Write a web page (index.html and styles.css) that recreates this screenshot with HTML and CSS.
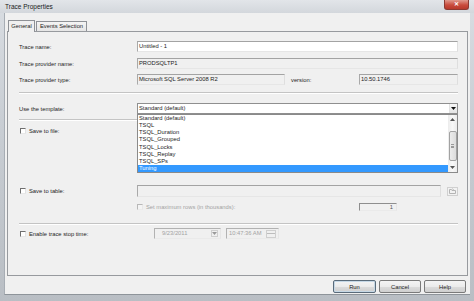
FILE: index.html
```html
<!DOCTYPE html>
<html>
<head>
<meta charset="utf-8">
<title>Trace Properties</title>
<link rel="stylesheet" href="styles.css">
</head>
<body>
<div class="window">
  <div class="titlebar">
    <span class="title">Trace Properties</span>
    <span class="close">&#x2715;</span>
  </div>
  <div class="client">
    <div class="tabs">
      <div class="tab active">General</div>
      <div class="tab">Events Selection</div>
    </div>
    <div class="panel">
      <div class="row r1">
        <span class="label">Trace name:</span>
        <div class="box edit grow">Untitled - 1</div>
      </div>
      <div class="row r2">
        <span class="label">Trace provider name:</span>
        <div class="box ro grow">PRODSQLTP1</div>
      </div>
      <div class="row r3">
        <span class="label">Trace provider type:</span>
        <div class="box ro type">Microsoft SQL Server 2008 R2</div>
        <span class="vlabel">version:</span>
        <div class="box ro grow">10.50.1746</div>
      </div>
      <div class="sep s1"></div>
      <div class="row r4">
        <span class="label">Use the template:</span>
        <div class="combo grow">
          <span class="combo-text">Standard (default)</span>
          <span class="combo-btn"><svg width="5" height="3" viewBox="0 0 5 3"><path d="M0 0H5L2.5 3Z" fill="#111"/></svg></span>
        </div>
        <div class="droplist">
          <ul class="items">
            <li>Standard (default)</li>
            <li>TSQL</li>
            <li>TSQL_Duration</li>
            <li>TSQL_Grouped</li>
            <li>TSQL_Locks</li>
            <li>TSQL_Replay</li>
            <li>TSQL_SPs</li>
            <li class="sel">Tuning</li>
          </ul>
          <div class="vscroll">
            <svg class="arr" width="5" height="3" viewBox="0 0 5 3"><path d="M0 3H5L2.5 0Z" fill="#555"/></svg>
            <div class="thumb"><span class="grip"></span></div>
            <svg class="arr" width="5" height="3" viewBox="0 0 5 3"><path d="M0 0H5L2.5 3Z" fill="#555"/></svg>
          </div>
        </div>
      </div>
      <div class="sep s2"></div>
      <div class="row r5">
        <span class="check"></span>
        <span class="clabel">Save to file:</span>
      </div>
      <div class="row r6">
        <span class="check"></span>
        <span class="clabel table-label">Save to table:</span>
        <div class="box ro grow"></div>
        <span class="browse"><svg width="7" height="6" viewBox="0 0 7 6"><path d="M0.5 1.5H2.5L3 2.5H6.5V5.5H0.5Z" fill="none" stroke="#b4b4b4"/><path d="M3 0.5L5 2" stroke="#c4c4c4"/></svg></span>
      </div>
      <div class="row r7">
        <span class="indent"></span>
        <span class="check dis"></span>
        <span class="clabel dim">Set maximum rows (in thousands):</span>
        <div class="box num">1</div>
      </div>
      <div class="sep s3"></div>
      <div class="row r8">
        <span class="check"></span>
        <span class="clabel stop-label">Enable trace stop time:</span>
        <div class="box picker date">
          <span class="dim">9/23/2011</span>
          <span class="pick-btn"><svg width="5" height="3" viewBox="0 0 5 3"><path d="M0 0H5L2.5 3Z" fill="#9a9a9a"/></svg></span>
        </div>
        <div class="box picker time">
          <span class="dim">10:47:36 AM</span>
          <span class="spin"><span class="spin-up"></span><span class="spin-dn"></span></span>
        </div>
      </div>
    </div>
    <div class="buttons">
      <button class="btn default">Run</button>
      <button class="btn">Cancel</button>
      <button class="btn">Help</button>
    </div>
  </div>
</div>
</body>
</html>
```

FILE: styles.css
```css
* { box-sizing: border-box; }
html, body { margin: 0; padding: 0; }
body {
  width: 474px;
  height: 301px;
  overflow: hidden;
  font-family: "Liberation Sans", Arial, sans-serif;
  font-size: 5.8px;
  color: #1c1c1c;
  background: #c3c8ce;
}
.window {
  width: 474px;
  height: 301px;
  display: flex;
  flex-direction: column;
  background: linear-gradient(#d9dde2, #c9ced4 40%, #b9bec4);
}
.titlebar {
  height: 13px;
  flex: none;
  display: flex;
  align-items: flex-start;
  padding-left: 5px;
  background: linear-gradient(#e2e5e9, #d3d7dc);
}
.title {
  font-size: 6.5px;
  line-height: 13px;
  color: #1a1a1a;
}
.close {
  margin-left: auto;
  margin-right: 5px;
  width: 25px;
  height: 10px;
  border: 1px solid #8c3a32;
  border-top: none;
  border-radius: 0 0 3px 3px;
  background: linear-gradient(#e09a8e, #c94c3d 55%, #b8392b);
  color: #fff;
  font-size: 6px;
  line-height: 9px;
  text-align: center;
  font-weight: bold;
}
.client {
  flex: 1;
  margin: 0 4px 6px 4px;
  border-left: 1px solid #a7adb4;
  border-bottom: 1px solid #8e949a;
  background: #f0f0f0;
  padding-top: 7px;
  display: flex;
  flex-direction: column;
}
.tabs {
  height: 11px;
  display: flex;
  align-items: flex-end;
  padding-left: 3px;
  position: relative;
  z-index: 1;
}
.tab {
  height: 10px;
  line-height: 9px;
  padding: 0 2px;
  border: 1px solid #8e9196;
  border-bottom: none;
  background: linear-gradient(#f4f4f4, #e6e6e6);
  font-size: 5.8px;
  white-space: nowrap;
  text-align: center;
  margin-right: 1px;
}
.tab.active {
  height: 12px;
  margin-bottom: -1px;
  background: #f0f0f0;
  width: 27px;
  line-height: 11px;
}
.tab:not(.active) { width: 51px; }
.panel {
  height: 245px;
  margin: 0 2px 0 2px;
  border: 1px solid #979a9e;
  padding: 0 9px 0 11px;
  background: #f0f0f0;
  display: flex;
  flex-direction: column;
}
.row {
  display: flex;
  align-items: center;
  flex: none;
  position: relative;
}
.label { width: 118px; flex: none; }
.grow { flex: 1; }
.box {
  height: 11px;
  line-height: 9px;
  padding: 0 1px;
  border: 1px solid;
  border-color: #a3a3a3 #dedede #e6e6e6 #a9a9a9;
  white-space: nowrap;
  overflow: hidden;
}
.edit { background: #fff; }
.ro { background: #f0f0f0; }
.r1 { margin-top: 9px; height: 11px; }
.r2 { margin-top: 6px; height: 11px; }
.r3 { margin-top: 5px; height: 11px; }
.type { width: 148px; flex: none; }
.vlabel { width: 68px; flex: none; margin-left: 6px; }
.sep {
  height: 2px;
  flex: none;
  border-top: 1px solid #c4c4c4;
  border-bottom: 1px solid #ffffff;
}
.s1 { margin-top: 7px; }
.r4 { margin-top: 9px; height: 11px; z-index: 2; }
.combo {
  height: 11px;
  border: 1px solid #8f8f8f;
  background: #fff;
  display: flex;
  align-items: center;
  padding-left: 1px;
}
.combo-text { flex: 1; line-height: 9px; }
.combo-btn {
  width: 8px;
  height: 9px;
  display: flex;
  align-items: center;
  justify-content: center;
  border-left: 1px solid #e2e2e2;
  background: linear-gradient(#f7f7f7, #e4e4e4);
}
.droplist {
  position: absolute;
  top: 11px;
  left: 118px;
  right: 0;
  height: 59px;
  border: 1px solid #8a8a8a;
  background: #fff;
  display: flex;
}
.items {
  list-style: none;
  margin: 0;
  padding: 0;
  flex: 1;
}
.items li {
  height: 7.125px;
  line-height: 7.125px;
  padding-left: 1px;
  white-space: nowrap;
}
.items li.sel {
  background: #3399ff;
  color: #fff;
}
.vscroll {
  width: 9px;
  flex: none;
  background: linear-gradient(90deg, #ececec, #f8f8f8 50%, #ececec);
  display: flex;
  flex-direction: column;
  align-items: center;
  padding: 3px 0 3px;
}
.vscroll .arr { flex: none; }
.thumb {
  margin-top: 10px;
  width: 8px;
  height: 30px;
  border: 1px solid #a2a2a2;
  border-radius: 2px;
  background: linear-gradient(90deg, #ececec, #dcdcdc);
  display: flex;
  align-items: center;
  justify-content: center;
  margin-bottom: auto;
}
.grip {
  width: 3px;
  height: 4px;
  border-top: 1px solid #999;
  border-bottom: 1px solid #999;
  background: linear-gradient(transparent 1px, #999 1px, #999 2px, transparent 2px);
}
.s2 { margin-top: 5px; }
.check {
  width: 6px;
  height: 6px;
  flex: none;
  margin-left: 1px;
  border: 1px solid;
  border-color: #6f6f6f #e2e2e2 #e8e8e8 #6f6f6f;
  background: #fff;
}
.check.dis {
  border-color: #b8b8b8 #e8e8e8 #ececec #b8b8b8;
  background: #f4f4f4;
  margin-left: 0;
}
.clabel { margin-left: 3px; }
.r5 { margin-top: 4px; height: 11px; }
.r6 { margin-top: 49px; height: 12px; }
.r6 .box { height: 12px; }
.table-label { width: 108px; flex: none; }
.browse {
  width: 11px;
  height: 9px;
  margin-left: 6px;
  flex: none;
  border: 1px solid #d0d0d0;
  background: #f2f2f2;
  display: flex;
  align-items: center;
  justify-content: center;
}
.r7 { margin-top: 5px; height: 9px; }
.indent { width: 118px; flex: none; }
.dim { color: #a3a3a3; }
.r7 .clabel { width: 213px; flex: none; }
.num {
  width: 38px;
  height: 8px;
  line-height: 7px;
  background: #f0f0f0;
  text-align: right;
  padding-right: 3px;
  color: #555;
  border-color: #8e8e8e #e6e6e6 #eaeaea #8e8e8e;
}
.s3 { margin-top: 12px; }
.r8 { margin-top: 3px; height: 11px; }
.stop-label { width: 125px; flex: none; }
.picker {
  display: flex;
  align-items: center;
  background: #f0f0f0;
  border-color: #b2b2b2 #e6e6e6 #eaeaea #b2b2b2;
}
.date { width: 67px; padding-left: 7px; }
.date .dim { flex: 1; }
.pick-btn {
  width: 7px;
  height: 7px;
  border: 1px solid #cfcfcf;
  display: flex;
  align-items: center;
  justify-content: center;
  margin-right: 1px;
}
.time { width: 53px; margin-left: 5px; padding-left: 2px; }
.time .dim { flex: 1; }
.spin {
  width: 10px;
  height: 8px;
  display: flex;
  flex-direction: column;
  border: 1px solid #cfcfcf;
  margin-right: 1px;
}
.spin-up, .spin-dn { flex: 1; }
.spin-up { border-bottom: 1px solid #bdbdbd; }
.buttons {
  display: flex;
  justify-content: flex-end;
  gap: 3px;
  margin-top: 4px;
  padding-right: 4px;
}
.btn {
  width: 42px;
  height: 13px;
  padding: 0;
  font-family: "Liberation Sans", Arial, sans-serif;
  font-size: 5.8px;
  color: #1c1c1c;
  border: 1px solid #7a7a7a;
  border-radius: 2px;
  background: linear-gradient(#f4f4f4, #ebebeb 50%, #dcdcdc 51%, #cfcfcf);
}
.btn.default {
  width: 43px;
  border-color: #5a6b7a;
  box-shadow: inset 0 0 0 1px #c6d8e6;
}
```
